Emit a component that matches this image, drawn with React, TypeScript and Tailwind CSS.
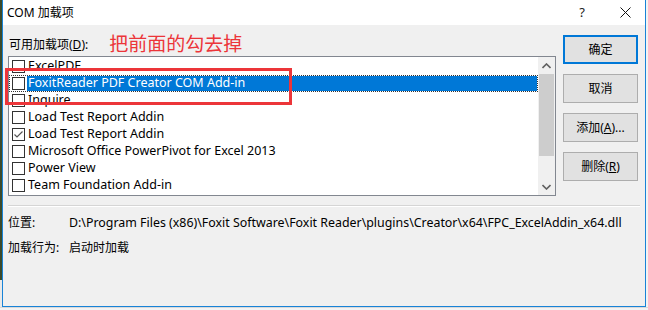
import React from 'react';

const items = [
  { label: 'ExcelPDF', checked: false },
  { label: 'FoxitReader PDF Creator COM Add-in', checked: false, selected: true },
  { label: 'Inquire', checked: false },
  { label: 'Load Test Report Addin', checked: false },
  { label: 'Load Test Report Addin', checked: true },
  { label: 'Microsoft Office PowerPivot for Excel 2013', checked: false },
  { label: 'Power View', checked: false },
  { label: 'Team Foundation Add-in', checked: false },
];

function CheckBox({ checked }: { checked: boolean }) {
  return (
    <div className="w-[13px] h-[13px] border border-[#333] bg-white flex items-center justify-center shrink-0">
      {checked && (
        <svg width="11" height="11" viewBox="0 0 11 11">
          <path d="M1.5 5.5 L4 8 L9.5 2.5" stroke="#555" strokeWidth="1.2" fill="none" />
        </svg>
      )}
    </div>
  );
}

function Button({ text, primary }: { text: React.ReactNode; primary?: boolean }) {
  return (
    <div
      className={
        'w-[75px] h-[29px] bg-[#e1e1e1] flex items-center justify-center text-[12px] text-black ' +
        (primary ? 'border-2 border-[#0078d7]' : 'border border-[#adadad]')
      }
    >
      {text}
    </div>
  );
}

export default function App() {
  return (
    <div className="w-[648px] h-[310px] bg-[#f3f3f3] flex flex-col overflow-hidden font-['Segoe_UI','Noto_Sans','Noto_Sans_CJK_SC',sans-serif] text-[12px] text-black">
      <div className="flex h-[307px]">
        {/* background left of the dialog */}
        <div className="w-[2px] flex flex-col">
          <div className="h-[280px] bg-[#3b4a2c]" />
          <div className="flex-1 bg-[#e9e9e9]" />
        </div>

        {/* dialog window */}
        <div className="w-[644px] flex flex-col border-x border-b border-[#1883d7]">
          {/* title bar */}
          <div className="h-[25px] bg-white flex items-center shrink-0">
            <span className="ml-[4px] text-[12px]">COM 加载项</span>
            <span className="ml-auto mr-[35px] text-[13px] text-[#222]">?</span>
            <svg width="11" height="11" viewBox="0 0 11 11" className="mr-[14px]">
              <path d="M0.5 0.5 L10.5 10.5 M10.5 0.5 L0.5 10.5" stroke="#111" strokeWidth="1" />
            </svg>
          </div>

          {/* body */}
          <div className="flex-1 bg-[#f0f0f0] relative flex flex-col">
            <div className="flex">
              <div className="ml-[5px] w-[548px] flex flex-col">
                <div className="mt-[8px] h-[23px] flex items-center">
                  <span className="ml-[1px]">
                    可用加载项(<span className="underline">D</span>):
                  </span>
                  <span className="ml-[21px] text-[19px] leading-none text-[#ec3539]">把前面的勾去掉</span>
                </div>

                {/* list box */}
                <div className="h-[140px] border border-[#828790] bg-white flex text-[12.5px]">
                  <div className="flex-1 pt-[1px] flex flex-col">
                    {items.map((item, i) => (
                      <div
                        key={i}
                        className={
                          'h-[17px] flex items-center ' +
                          (item.selected ? 'border border-dotted border-[#333] pl-[2px]' : 'pl-[3px]')
                        }
                      >
                        <CheckBox checked={item.checked} />
                        {item.selected ? (
                          <div className="ml-[2px] flex-1 h-full bg-[#0078d7] text-white flex items-center pl-[1px]">
                            {item.label}
                          </div>
                        ) : (
                          <span className="ml-[3px]">{item.label}</span>
                        )}
                      </div>
                    ))}
                  </div>

                  {/* scrollbar */}
                  <div className="w-[17px] bg-[#f0f0f0] flex flex-col items-center">
                    <div className="h-[17px] flex items-center justify-center">
                      <svg width="9" height="6" viewBox="0 0 9 6">
                        <path d="M0.5 5 L4.5 1 L8.5 5" stroke="#606060" strokeWidth="1.6" fill="none" />
                      </svg>
                    </div>
                    <div className="w-[15px] h-[82px] bg-[#cdcdcd]" />
                    <div className="flex-1" />
                    <div className="h-[17px] flex items-center justify-center">
                      <svg width="9" height="6" viewBox="0 0 9 6">
                        <path d="M0.5 1 L4.5 5 L8.5 1" stroke="#606060" strokeWidth="1.6" fill="none" />
                      </svg>
                    </div>
                  </div>
                </div>
              </div>

              {/* buttons */}
              <div className="ml-[7px] pt-[10px] flex flex-col gap-[10px]">
                <Button text="确定" primary />
                <Button text="取消" />
                <Button
                  text={
                    <span>
                      添加(<span className="underline">A</span>)...
                    </span>
                  }
                />
                <Button
                  text={
                    <span>
                      删除(<span className="underline">R</span>)
                    </span>
                  }
                />
              </div>
            </div>

            {/* separator */}
            <div className="mt-[9px] mx-[5px] h-[2px] border-t border-[#d5d5d5] border-b border-b-white" />

            <div className="mt-[6px] ml-[5px] h-[20px] flex items-center">
              <span className="w-[61px]">位置:</span>
              <span className="text-[12.4px]">{'D:\\Program Files (x86)\\Foxit Software\\Foxit Reader\\plugins\\Creator\\x64\\FPC_ExcelAddin_x64.dll'}</span>
            </div>
            <div className="mt-[5px] ml-[5px] h-[20px] flex items-center">
              <span className="w-[61px]">加载行为:</span>
              <span>启动时加载</span>
            </div>

            {/* red annotation box */}
            <div className="absolute left-[2px] top-[43px] w-[287px] h-[37px] border-[3px] border-[#ec3539]" />
          </div>
        </div>

        {/* background right of the dialog */}
        <div className="flex-1 bg-[#f3f3f3]" />
      </div>
      <div className="flex-1 bg-[#f3f3f3] border-t border-[#d9d9d9]" />
    </div>
  );
}
